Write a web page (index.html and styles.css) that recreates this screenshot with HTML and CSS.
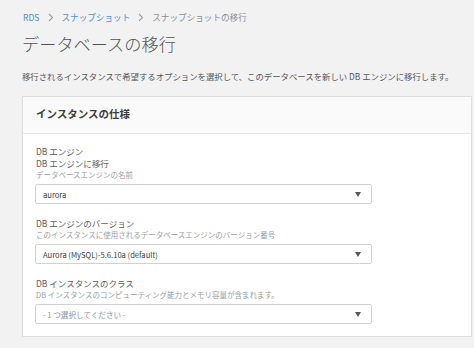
FILE: index.html
```html
<!DOCTYPE html>
<html lang="ja">
<head>
<meta charset="utf-8">
<link rel="stylesheet" href="styles.css">
</head>
<body>
<div class="page">
  <nav class="crumbs">
    <a class="crumb-link">RDS</a>
    <span class="sep"><svg width="6" height="9" viewBox="0 0 6 9"><path d="M1 1l3.5 3.5L1 8" fill="none" stroke="#9aa0a6" stroke-width="1.1"/></svg></span>
    <a class="crumb-link">スナップショット</a>
    <span class="sep"><svg width="6" height="9" viewBox="0 0 6 9"><path d="M1 1l3.5 3.5L1 8" fill="none" stroke="#9aa0a6" stroke-width="1.1"/></svg></span>
    <span class="crumb-current">スナップショットの移行</span>
  </nav>
  <h1 class="title">データベースの移行</h1>
  <p class="desc">移行されるインスタンスで希望するオプションを選択して、このデータベースを新しい DB エンジンに移行します。</p>

  <section class="card">
    <header class="card-head">インスタンスの仕様</header>
    <div class="card-body">
      <div class="field">
        <div class="label">DB エンジン</div>
        <div class="label">DB エンジンに移行</div>
        <div class="hint">データベースエンジンの名前</div>
        <div class="select"><span class="value">aurora</span><span class="arrow"></span></div>
      </div>
      <div class="field">
        <div class="label">DB エンジンのバージョン</div>
        <div class="hint">このインスタンスに使用されるデータベースエンジンのバージョン番号</div>
        <div class="select"><span class="value">Aurora (MySQL)-5.6.10a (default)</span><span class="arrow"></span></div>
      </div>
      <div class="field">
        <div class="label">DB インスタンスのクラス</div>
        <div class="hint">DB インスタンスのコンピューティング能力とメモリ容量が含まれます。</div>
        <div class="select"><span class="value placeholder">- 1 つ選択してください -</span><span class="arrow"></span></div>
      </div>
    </div>
  </section>
</div>
</body>
</html>
```

FILE: styles.css
```css
html, body {
  margin: 0;
  padding: 0;
  background: #f2f2f2;
  font-family: "Noto Sans CJK JP", "Noto Sans", sans-serif;
  color: #444;
}

.page {
  padding: 11px 2px 0 22px;
}

.crumbs {
  display: flex;
  align-items: center;
  height: 12px;
  font-size: 8.6px;
  line-height: 12px;
  padding-left: 1px;
}

.crumb-link {
  color: #4b8fcf;
}

.sep {
  display: flex;
  align-items: center;
  margin: 0 8px 0 8px;
}

.crumb-current {
  color: #8a8f94;
}

.title {
  margin: 10px 0 0 0;
  font-size: 17.2px;
  line-height: 22px;
  font-weight: 300;
  color: #505559;
}

.desc {
  margin: 15px 0 0 0;
  font-size: 8.4px;
  line-height: 12px;
  color: #555;
}

.card {
  margin-top: 14px;
  background: #fff;
  border: 1px solid #dedede;
  box-shadow: 0 1px 1px rgba(0,0,0,0.07);
}

.card-head {
  background: #fafafa;
  border-bottom: 1px solid #e6e6e6;
  padding: 10px 13px 12px 13px;
  font-size: 10.5px;
  line-height: 14px;
  font-weight: 700;
  color: #3c3f42;
}

.card-body {
  padding: 11px 13px 12px 13px;
  display: flex;
  flex-direction: column;
  gap: 13px;
}

.field {
  display: flex;
  flex-direction: column;
}

.label {
  font-size: 8.5px;
  line-height: 12px;
  color: #5a5e62;
}

.hint {
  font-size: 7.5px;
  line-height: 12px;
  color: #9a9ea2;
}

.select {
  margin-top: 3px;
  width: 337px;
  height: 20px;
  box-sizing: border-box;
  border: 1px solid #cfd2d4;
  border-radius: 2px;
  background: #fff;
  display: flex;
  align-items: center;
  justify-content: space-between;
  padding: 0 10px 0 7px;
  margin-left: -1px;
}

.value {
  font-size: 7.6px;
  color: #3a3d40;
}

.value.placeholder {
  color: #8e9296;
}

.arrow {
  width: 0;
  height: 0;
  border-left: 3.5px solid transparent;
  border-right: 3.5px solid transparent;
  border-top: 5px solid #555a5e;
}
```
